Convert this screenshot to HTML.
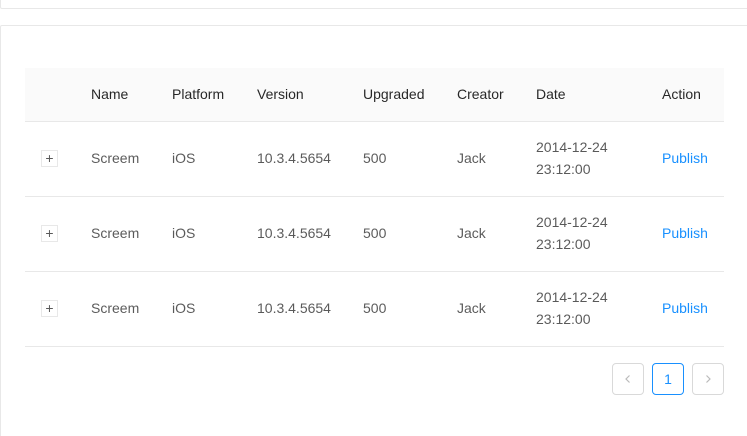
<!DOCTYPE html>
<html style="width:747px;height:436px;overflow:hidden"><head><style>
*{margin:0;padding:0;box-sizing:border-box}
body{width:747px;height:436px;background:#fff;font-family:"Liberation Sans",sans-serif;font-size:14px;color:rgba(0,0,0,.65);position:relative;overflow:hidden}
.c1{position:absolute;left:0;top:-10px;width:760px;height:19px;border:1px solid #e8e8e8;border-radius:2px}
.c2{position:absolute;left:0;top:25px;width:760px;height:430px;border:1px solid #e8e8e8;border-radius:2px}
.hd{position:absolute;left:25px;top:68px;width:699px;height:54px;background:#fafafa;border-bottom:1px solid #e8e8e8}
.row{position:absolute;left:25px;width:699px;height:75px;border-bottom:1px solid #e8e8e8}
.t{position:absolute;white-space:nowrap;line-height:22px}
.h{color:rgba(0,0,0,.85);top:15px}
.r{top:25px}
.d{top:14px}
.a{color:#1890ff}
.pl{position:absolute;left:16px;top:28px;width:17px;height:17px;border:1px solid #e8e8e8;background:#fff;text-align:center;line-height:14px;font-size:14px;color:rgba(0,0,0,.65)}
.pg{position:absolute;top:363px;width:32px;height:32px;border:1px solid #d9d9d9;border-radius:4px;text-align:center;line-height:30px;color:#bbb}
</style></head><body>
<div class="c1"></div><div class="c2"></div>
<div class="hd">
<span class="t h" style="left:66px">Name</span>
<span class="t h" style="left:147px">Platform</span>
<span class="t h" style="left:232px">Version</span>
<span class="t h" style="left:338px">Upgraded</span>
<span class="t h" style="left:432px">Creator</span>
<span class="t h" style="left:511px">Date</span>
<span class="t h" style="left:637px">Action</span>
</div>
<div class="row" style="top:122px"><div class="pl">+</div>
<span class="t r" style="left:66px">Screem</span><span class="t r" style="left:147px">iOS</span><span class="t r" style="left:232px">10.3.4.5654</span><span class="t r" style="left:338px">500</span><span class="t r" style="left:432px">Jack</span><span class="t d" style="left:511px">2014-12-24<br>23:12:00</span><span class="t r a" style="left:637px">Publish</span></div>
<div class="row" style="top:197px"><div class="pl">+</div>
<span class="t r" style="left:66px">Screem</span><span class="t r" style="left:147px">iOS</span><span class="t r" style="left:232px">10.3.4.5654</span><span class="t r" style="left:338px">500</span><span class="t r" style="left:432px">Jack</span><span class="t d" style="left:511px">2014-12-24<br>23:12:00</span><span class="t r a" style="left:637px">Publish</span></div>
<div class="row" style="top:272px"><div class="pl">+</div>
<span class="t r" style="left:66px">Screem</span><span class="t r" style="left:147px">iOS</span><span class="t r" style="left:232px">10.3.4.5654</span><span class="t r" style="left:338px">500</span><span class="t r" style="left:432px">Jack</span><span class="t d" style="left:511px">2014-12-24<br>23:12:00</span><span class="t r a" style="left:637px">Publish</span></div>
<div class="pg" style="left:612px"><svg width="10" height="10" viewBox="0 0 10 10" style="margin-top:10px"><path d="M6.5 1.5L3 5l3.5 3.5" fill="none" stroke="#bbb" stroke-width="1.2"/></svg></div>
<div class="pg" style="left:652px;border-color:#1890ff;color:#1890ff">1</div>
<div class="pg" style="left:692px"><svg width="10" height="10" viewBox="0 0 10 10" style="margin-top:10px"><path d="M3.5 1.5L7 5l-3.5 3.5" fill="none" stroke="#bbb" stroke-width="1.2"/></svg></div>
</body></html>
